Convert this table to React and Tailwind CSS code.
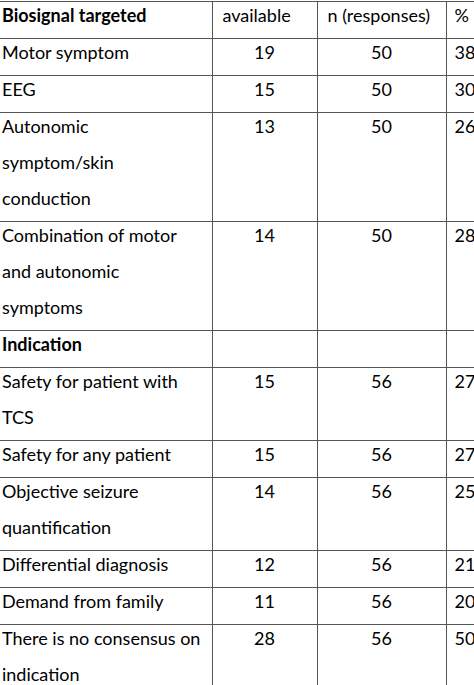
import React from "react";

const rows = [
  { label: "Biosignal targeted", a: "available", n: "n (responses)", p: "%", header: true },
  { label: "Motor symptom", a: "19", n: "50", p: "38" },
  { label: "EEG", a: "15", n: "50", p: "30" },
  { label: ["Autonomic", "symptom/skin", "conduction"], a: "13", n: "50", p: "26" },
  { label: ["Combination of motor", "and autonomic", "symptoms"], a: "14", n: "50", p: "28" },
  { label: "Indication", a: "", n: "", p: "", bold: true },
  { label: ["Safety for patient with", "TCS"], a: "15", n: "56", p: "27" },
  { label: "Safety for any patient", a: "15", n: "56", p: "27" },
  { label: ["Objective seizure", "quantification"], a: "14", n: "56", p: "25" },
  { label: "Differential diagnosis", a: "12", n: "56", p: "21" },
  { label: "Demand from family", a: "11", n: "56", p: "20" },
  { label: ["There is no consensus on", "indication"], a: "28", n: "56", p: "50" },
];

function Label({ label }) {
  const lines = Array.isArray(label) ? label : [label];
  return (
    <div className="-translate-y-[5px]">
      {lines.map((l, i) => (
        <div key={i}>{l}</div>
      ))}
    </div>
  );
}

export default function App() {
  return (
    <div
      className="w-[474px] h-[685px] overflow-hidden bg-white text-[#000] text-[18px] leading-[36px]"
      style={{ fontFamily: "Lato, 'Open Sans', sans-serif" }}
    >
      <table className="table-fixed border-collapse mt-px w-[520px]">
        <colgroup>
          <col className="w-[212px]" />
          <col className="w-[105px]" />
          <col className="w-[129px]" />
          <col className="w-[74px]" />
        </colgroup>
        <tbody>
          {rows.map((r, i) => (
            <tr key={i}>
              <td className={`border border-[#555] border-l-0 align-top p-0 pl-[2px] ${r.header || r.bold ? "font-bold" : ""}`}>
                <Label label={r.label} />
              </td>
              <td className={`border border-[#555] align-top p-0 ${r.header ? "text-left pl-[10px]" : "text-center"}`}>
                <div className="-translate-y-[5px]">{r.a}</div>
              </td>
              <td className={`border border-[#555] align-top p-0 ${r.header ? "text-left pl-[10px]" : "text-center"}`}>
                <div className="-translate-y-[5px]">{r.n}</div>
              </td>
              <td className="border border-[#555] align-top p-0 pl-[8px] text-left">
                <div className="-translate-y-[5px]">{r.p}</div>
              </td>
            </tr>
          ))}
        </tbody>
      </table>
    </div>
  );
}
